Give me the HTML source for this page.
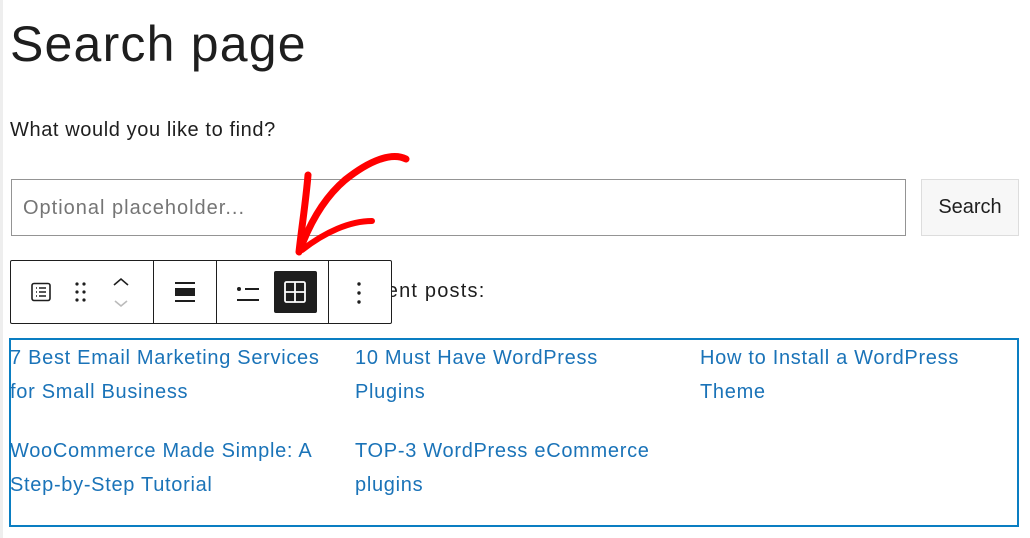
<!DOCTYPE html><html><head><style>
body{margin:0;width:1030px;height:538px;background:#fff;font-family:"Liberation Sans",sans-serif;position:relative;overflow:hidden;color:#1e1e1e}
.a{position:absolute}
h1{position:absolute;left:10px;top:15px;margin:0;font-weight:400;font-size:50px;letter-spacing:1.2px;color:#1e1e1e}
.l{color:#1a73b8;font-size:20px;line-height:34px;letter-spacing:0.7px}
.tb{left:10px;top:260px;width:380px;height:62px;border:1px solid #1e1e1e;border-radius:2px;background:#fff;display:flex}
.tb div{border-right:1px solid #1e1e1e;position:relative}
</style></head><body>
<div class="a" style="left:0;top:0;width:3px;height:538px;background:#eee"></div>
<h1>Search page</h1>
<div class="a" style="left:10px;top:119px;font-size:20px;letter-spacing:0.6px">What would you like to find?</div>
<div class="a" style="left:11px;top:179px;width:893px;height:55px;border:1px solid #949494"></div>
<div class="a" style="left:23px;top:197px;font-size:20px;letter-spacing:1px;color:#757575">Optional placeholder...</div>
<div class="a" style="left:921px;top:179px;width:96px;height:55px;border:1px solid #ddd;background:#f7f7f7;font-size:20px;line-height:55px;text-align:center">Search</div>
<div class="a" style="left:380px;top:280px;font-size:20px;letter-spacing:1.2px">tent posts:</div>
<div class="a tb">
<div style="width:142px">
<svg class="a" style="left:18px;top:19px" width="24" height="24" viewBox="0 0 24 24" fill="none" stroke="#1e1e1e" stroke-width="1.6"><rect x="3" y="3.5" width="18" height="17" rx="2"/><path d="M7 8h1M10 8h7M7 12h1M10 12h7M7 16h1M10 16h7"/></svg>
<svg class="a" style="left:62px;top:20px" width="16" height="22"><g fill="#1e1e1e"><circle cx="4" cy="3" r="1.6"/><circle cx="11" cy="3" r="1.6"/><circle cx="4" cy="11" r="1.6"/><circle cx="11" cy="11" r="1.6"/><circle cx="4" cy="19" r="1.6"/><circle cx="11" cy="19" r="1.6"/></g></svg>
<svg class="a" style="left:100px;top:14px" width="20" height="36" fill="none" stroke-width="1.6"><path d="M3 10l7-6 7 6" stroke="#1e1e1e"/><path d="M4 26l6 5 6-5" stroke="#bbb"/></svg>
</div>
<div style="width:63px"><svg class="a" style="left:20px;top:19px" width="22" height="24"><rect x="1" y="2" width="20" height="2" fill="#1e1e1e"/><rect x="1" y="8" width="20" height="8" fill="#1e1e1e"/><rect x="1" y="20" width="20" height="2" fill="#1e1e1e"/></svg></div>
<div style="width:111px">
<svg class="a" style="left:18px;top:20px" width="26" height="24"><circle cx="4" cy="8" r="2" fill="#1e1e1e"/><rect x="10" y="7" width="14" height="2" fill="#1e1e1e"/><rect x="2" y="18" width="22" height="2" fill="#1e1e1e"/></svg>
<div class="a" style="left:57px;top:10px;width:42px;height:42px;background:#1e1e1e;border-radius:2px"><svg class="a" style="left:9px;top:9px" width="24" height="24" fill="none" stroke="#fff" stroke-width="1.8"><rect x="2" y="2" width="20" height="20" rx="1.5"/><path d="M12 2v20M2 12h20"/></svg></div>
</div>
<div style="width:62px;border:none"><svg class="a" style="left:27px;top:20px" width="6" height="24" fill="#1e1e1e"><circle cx="3" cy="3" r="1.7"/><circle cx="3" cy="12" r="1.7"/><circle cx="3" cy="21" r="1.7"/></svg></div>
</div>
<div class="a" style="left:9px;top:338px;width:1006px;height:185px;border:2px solid #0a7ec2"></div>
<div class="a l" style="left:10px;top:341px">7 Best Email Marketing Services<br>for Small Business</div>
<div class="a l" style="left:355px;top:341px">10 Must Have WordPress<br>Plugins</div>
<div class="a l" style="left:700px;top:341px">How to Install a WordPress<br>Theme</div>
<div class="a l" style="left:10px;top:434px">WooCommerce Made Simple: A<br>Step-by-Step Tutorial</div>
<div class="a l" style="left:355px;top:434px">TOP-3 WordPress eCommerce<br>plugins</div>
<svg class="a" style="left:0;top:0" width="1030" height="538" fill="none" stroke="#f00" stroke-linecap="round" stroke-linejoin="round"><path d="M406 159C392 152 370 160 345 180C325 197 312 220 303 242" stroke-width="7"/><path d="M308 175C306 200 302 225 299 252" stroke-width="7"/><path d="M372 221C350 221 325 232 302 250" stroke-width="6"/></svg>
</body></html>
